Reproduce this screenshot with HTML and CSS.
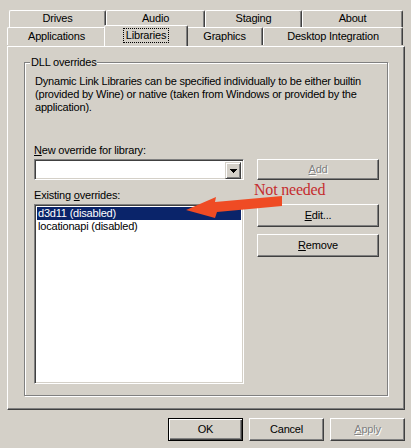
FILE: index.html
```html
<!DOCTYPE html>
<html lang="en">
<head>
    <meta charset="UTF-8">
    <title>Wine configuration - Libraries</title>
    <link rel="stylesheet" href="styles.css">
</head>
<body>
    <div class="dialog">
        <!-- Tab strip -->
        <div class="tabs">
            <div class="tab-row back">
                <div class="tab t-drives">Drives</div>
                <div class="tab t-audio">Audio</div>
                <div class="tab t-staging">Staging</div>
                <div class="tab t-about">About</div>
            </div>
            <div class="tab-row front">
                <div class="tab t-apps">Applications</div>
                <div class="tab t-libs active"><span class="focus">Libraries</span></div>
                <div class="tab t-graphics">Graphics</div>
                <div class="tab t-desktop">Desktop Integration</div>
            </div>
        </div>

        <!-- Libraries page -->
        <div class="panel">
            <fieldset class="group">
                <legend>DLL overrides</legend>
                <p class="intro">Dynamic Link Libraries can be specified individually to be either builtin<br>(provided by Wine) or native (taken from Windows or provided by the<br>application).</p>

                <div class="override-form">
                    <div class="field-label new-label"><u>N</u>ew override for library:</div>
                    <div class="spacer"></div>

                    <div class="combo">
                        <span class="combo-btn">
                            <svg width="7" height="4" viewBox="0 0 7 4"><path d="M0 0H7V1H6V2H5V3H4V4H3V3H2V2H1V1H0Z" fill="#000"/></svg>
                        </span>
                    </div>
                    <button class="btn disabled btn-add"><u>A</u>dd</button>

                    <div class="field-label existing-label">Existing <u>o</u>verrides:</div>
                    <div class="spacer"></div>

                    <ul class="list">
                        <li class="selected">d3d11 (disabled)</li>
                        <li>locationapi (disabled)</li>
                    </ul>
                    <div class="side-buttons">
                        <button class="btn btn-tall"><u>E</u>dit...</button>
                        <button class="btn btn-tall"><u>R</u>emove</button>
                    </div>
                </div>
            </fieldset>
        </div>

        <!-- Dialog buttons -->
        <div class="footer">
            <button class="btn btn-dialog default">OK</button>
            <button class="btn btn-dialog">Cancel</button>
            <button class="btn btn-dialog disabled"><u>A</u>pply</button>
        </div>

        <!-- Hand-drawn note on top of the screenshot -->
        <svg class="note" width="411" height="448" viewBox="0 0 411 448">
            <polygon points="186,210 216,197 215,202 282,196 282,206 217,212 215,218" fill="#ef4b24"/>
            <text x="254" y="195" class="note-text">Not needed</text>
        </svg>
    </div>
</body>
</html>
```

FILE: styles.css
```css
/* General Reset */
* {
    margin: 0;
    padding: 0;
    box-sizing: border-box;
}

body {
    background-color: #d4d0c8;
    font-family: "Liberation Sans", Arial, sans-serif;
    font-size: 11px;
    line-height: 13px;
    letter-spacing: -0.2px;
    color: #000;
}

.dialog {
    position: relative;
    width: 411px;
    height: 448px;
    padding: 10px 6px 0 7px;
}

/* Tabs */
.tab-row {
    display: flex;
}

.tab-row.back {
    margin-left: 2px;
}

.tab {
    height: 17px;
    border: 1px solid;
    border-bottom: none;
    border-color: #fff #404040 #404040 #fff;
    border-radius: 2px 2px 0 0;
    box-shadow: inset -1px 0 #808080;
    background-color: #d4d0c8;
    text-align: center;
    line-height: 15px;
}

.front .tab {
    height: 18px;
    line-height: 16px;
}

.t-drives { width: 97px; }
.t-audio { width: 99px; }
.t-staging { width: 97px; }
.t-about { width: 101px; }

.t-apps { width: 99px; }
.t-libs { width: 84px; }
.t-graphics { width: 77px; }
.t-desktop { width: 140px; }

.tab.active {
    position: relative;
    z-index: 2;
    height: 21px;
    margin: -2px -2px 0 -2px;
    line-height: 18px;
}

.focus {
    padding: 0 2px 1px 2px;
    outline: 1px dotted #000;
    outline-offset: 0;
}

/* Page panel */
.panel {
    width: 398px;
    height: 364px;
    border: 1px solid;
    border-color: #fff #404040 #404040 #fff;
    box-shadow: inset -1px -1px #808080;
    padding: 9px 16px 0 16px;
}

.group {
    height: 340px;
    border: 1px solid #808080;
    box-shadow: 1px 1px #fff, inset 1px 1px #fff;
    padding: 0;
}

.group legend {
    margin-left: 5px;
    padding: 0 1px;
    background-color: #d4d0c8;
}

.intro {
    margin: 6px 0 0 10px;
}

.override-form {
    display: grid;
    grid-template-columns: 210px 122px;
    column-gap: 13px;
    margin: 30px 0 0 9px;
}

.field-label {
    height: 15px;
}

.existing-label {
    margin-top: 9px;
}

/* Combo box */
.combo {
    position: relative;
    height: 21px;
    border: 1px solid;
    border-color: #808080 #fff #fff #808080;
    box-shadow: inset 1px 1px #404040, inset -1px -1px #d4d0c8;
    background-color: #fff;
    display: flex;
    justify-content: flex-end;
    padding: 2px;
}

.combo-btn {
    width: 16px;
    height: 17px;
    border: 1px solid;
    border-color: #d4d0c8 #404040 #404040 #d4d0c8;
    box-shadow: inset 1px 1px #fff, inset -1px -1px #808080;
    background-color: #d4d0c8;
    display: flex;
    align-items: center;
    justify-content: center;
}

/* List box */
.list {
    list-style: none;
    height: 180px;
    border: 1px solid;
    border-color: #808080 #fff #fff #808080;
    box-shadow: inset 1px 1px #404040, inset -1px -1px #d4d0c8;
    background-color: #fff;
    padding: 2px;
}

.list li {
    height: 13px;
    padding-left: 1px;
}

.list li.selected {
    background-color: #0a246a;
    color: #fff;
}

/* Buttons */
.btn {
    font-family: inherit;
    font-size: 11px;
    letter-spacing: inherit;
    color: #000;
    background-color: #d4d0c8;
    border: 1px solid;
    border-color: #fff #404040 #404040 #fff;
    box-shadow: inset -1px -1px #808080;
    line-height: 13px;
    cursor: default;
}

.btn.disabled {
    color: #808080;
    text-shadow: 1px 1px #fff;
}

.btn-add {
    height: 21px;
}

.side-buttons {
    display: flex;
    flex-direction: column;
    gap: 7px;
}

.btn-tall {
    height: 23px;
}

/* Dialog footer */
.footer {
    display: flex;
    justify-content: flex-end;
    gap: 6px;
    margin-top: 8px;
}

.btn-dialog {
    width: 75px;
    height: 23px;
}

.btn-dialog.default {
    border-color: #000;
    box-shadow: inset 1px 1px #fff, inset -1px -1px #404040, inset -2px -2px #808080;
}

/* Annotation */
.note {
    position: absolute;
    top: 0;
    left: 0;
    pointer-events: none;
}

.note-text {
    font-family: "Liberation Serif", "Times New Roman", serif;
    font-size: 16px;
    fill: #c52d2f;
}
```
